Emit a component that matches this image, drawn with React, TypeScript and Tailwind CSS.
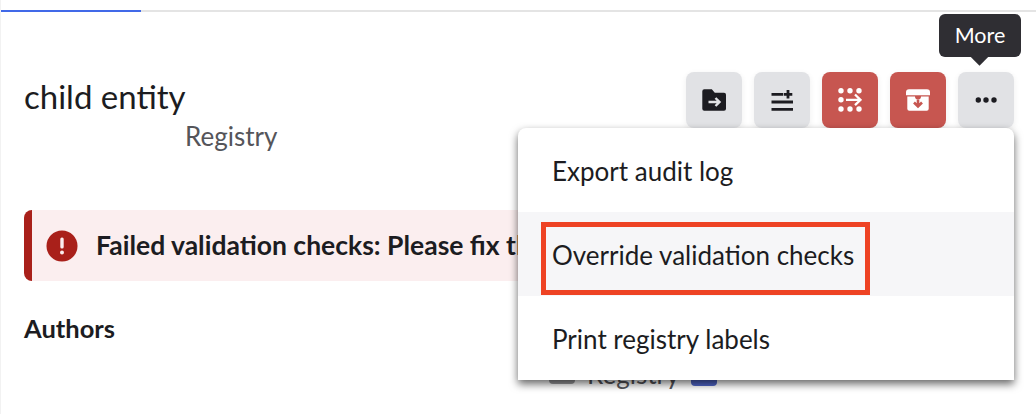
const font = "[font-family:Lato,'Liberation_Sans',sans-serif]";

function FolderIcon() {
  return (
    <svg width="24" height="24" viewBox="0 0 24 24">
      <path d="M2.3 1.3h7.5l3 3.500h9.200a2 2 0 0 1 2 2v13.900a2 2 0 0 1-2 2H2.300a2 2 0 0 1-2-2V3.300a2 2 0 0 1 2-2z" fill="#1c1c21" />
      <path d="M6.500 14h11M13.500 10 17.500 14l-4 4" fill="none" stroke="#e1e2e5" strokeWidth="2.400" />
    </svg>
  );
}

function ListPlusIcon() {
  return (
    <svg width="24" height="24" viewBox="0 0 24 24">
      <path d="M1.500 6.300h11.500M1.500 14h21.500M1.500 21.300h21.500M18 2v8.600M13.700 6.300h8.600" fill="none" stroke="#1c1c21" strokeWidth="2.800" />
    </svg>
  );
}

function DotsArrowIcon() {
  return (
    <svg width="24" height="24" viewBox="0 0 24 24" fill="#fff">
      <circle cx="3" cy="2.700" r="2.700" />
      <circle cx="12" cy="2.700" r="2.700" />
      <circle cx="21" cy="2.700" r="2.700" />
      <circle cx="3" cy="11.700" r="2.700" />
      <circle cx="3" cy="21" r="2.700" />
      <circle cx="12" cy="21" r="2.700" />
      <circle cx="21" cy="21" r="2.700" />
      <path d="M8 11.800h14.500M17 6.500l5.500 5.300-5.500 5.300" fill="none" stroke="#fff" strokeWidth="2.300" />
    </svg>
  );
}

function ArchiveIcon() {
  return (
    <svg width="26" height="24" viewBox="0 0 26 24">
      <path d="M4 1.300h18a3 3 0 0 1 3 3v2.900H1V4.300a3 3 0 0 1 3-3z" fill="#fff" />
      <path d="M2.300 8.400h7.700a3 3 0 0 0 6 0h7.700v12.300a2 2 0 0 1-2 2H4.300a2 2 0 0 1-2-2z" fill="#fff" />
      <path d="M13 11.500v6.500M9 14.500l4 4 4-4" fill="none" stroke="#c75650" strokeWidth="2.600" />
    </svg>
  );
}

function MoreIcon() {
  return (
    <svg width="24" height="24" viewBox="0 0 24 24" fill="#1c1c21">
      <circle cx="4.300" cy="12" r="2.700" />
      <circle cx="12" cy="12" r="2.700" />
      <circle cx="20" cy="12" r="2.700" />
    </svg>
  );
}

function AlertIcon() {
  return (
    <svg width="32" height="32" viewBox="0 0 32 32" className="shrink-0">
      <circle cx="16" cy="16" r="15.500" fill="#a9201a" />
      <rect x="14.300" y="7.500" width="3.400" height="11" rx="1.500" fill="#fbeeef" />
      <circle cx="16" cy="22.500" r="2" fill="#fbeeef" />
    </svg>
  );
}

export default function App() {
  return (
    <div className={`relative h-[414px] w-[1036px] overflow-hidden border-l border-[#f2f2f2] bg-white text-[#1c1c21] ${font}`}>
      {/* Tabs underline */}
      <div className="mt-[10px] h-[2px] bg-[#e4e4e4]">
        <div className="h-[2px] w-[140px] bg-[#4169e8]" />
      </div>

      {/* Header */}
      <div className="flex justify-between pl-[23px] pr-[22px] pt-[60px]">
        <div>
          <h1 className="text-[33px] leading-[48px]">child entity</h1>
          <div className="ml-[161px] text-[26px] leading-[32px] text-[#55555a]">Registry</div>
        </div>
        <div className="flex gap-3">
          <button className="flex h-14 w-14 items-center justify-center rounded-lg bg-[#e1e2e5] shadow-[0_2px_6px_rgba(0,0,0,0.07)]">
            <FolderIcon />
          </button>
          <button className="flex h-14 w-14 items-center justify-center rounded-lg bg-[#e1e2e5] shadow-[0_2px_6px_rgba(0,0,0,0.07)]">
            <ListPlusIcon />
          </button>
          <button className="flex h-14 w-14 items-center justify-center rounded-lg bg-[#c75650] shadow-[0_2px_6px_rgba(0,0,0,0.07)]">
            <DotsArrowIcon />
          </button>
          <button className="flex h-14 w-14 items-center justify-center rounded-lg bg-[#c75650] shadow-[0_2px_6px_rgba(0,0,0,0.07)]">
            <ArchiveIcon />
          </button>
          <div className="relative">
            <button className="flex h-14 w-14 items-center justify-center rounded-lg bg-[#e1e2e5] shadow-[0_2px_6px_rgba(0,0,0,0.07)]">
              <MoreIcon />
            </button>

            {/* Tooltip */}
            <div className="absolute left-[-19px] top-[-58px] flex h-[43px] w-[82px] items-center justify-center rounded-md bg-[#2f2e33] text-[21.500px] text-white">
              More
              <div className="absolute left-[34px] top-[36px] h-[13px] w-[13px] rotate-45 bg-[#2f2e33]" />
            </div>

            {/* Dropdown */}
            <div className="absolute right-0 top-14 z-10 w-[496px] rounded-t-lg bg-white text-[26px] shadow-[0_4px_9px_rgba(0,0,0,0.6)]">
              <div className="flex h-[84px] items-center pl-[34px] pt-[3px]">Export audit log</div>
              <div className="relative flex h-[84px] items-center bg-[#f6f6f8] pl-[34px] pt-[3px]">
                Override validation checks
                <div className="absolute left-[23px] top-[10px] h-[73px] w-[329px] border-[5px] border-[#ee4324]" />
              </div>
              <div className="flex h-[84px] items-center pl-[34px] pt-[3px]">Print registry labels</div>
            </div>
          </div>
        </div>
      </div>

      {/* Validation alert, runs under the dropdown */}
      <div className="ml-[23px] mt-[58px] flex h-[71px] w-[495px] items-center gap-[18px] overflow-hidden rounded-l-lg border-l-[8px] border-[#a9201a] bg-[#fbeeef] pl-[14px] whitespace-nowrap">
        <AlertIcon />
        <span className="text-[26.500px] font-bold">Failed validation checks: Please fix th</span>
      </div>

      {/* Authors */}
      <div className="flex pl-[23px] pt-[30px]">
        <div className="w-[525px] text-[25.500px] font-bold leading-[34px]">Authors</div>
        <div className="mt-[44px] flex items-center gap-3 text-[26px] text-[#55555a]">
          <div className="h-[18px] w-[26px] rounded bg-[#9a9a9d]" />
          <span>Registry</span>
          <div className="h-[22px] w-[26px] rounded bg-[#5066c8]" />
        </div>
      </div>
    </div>
  );
}
